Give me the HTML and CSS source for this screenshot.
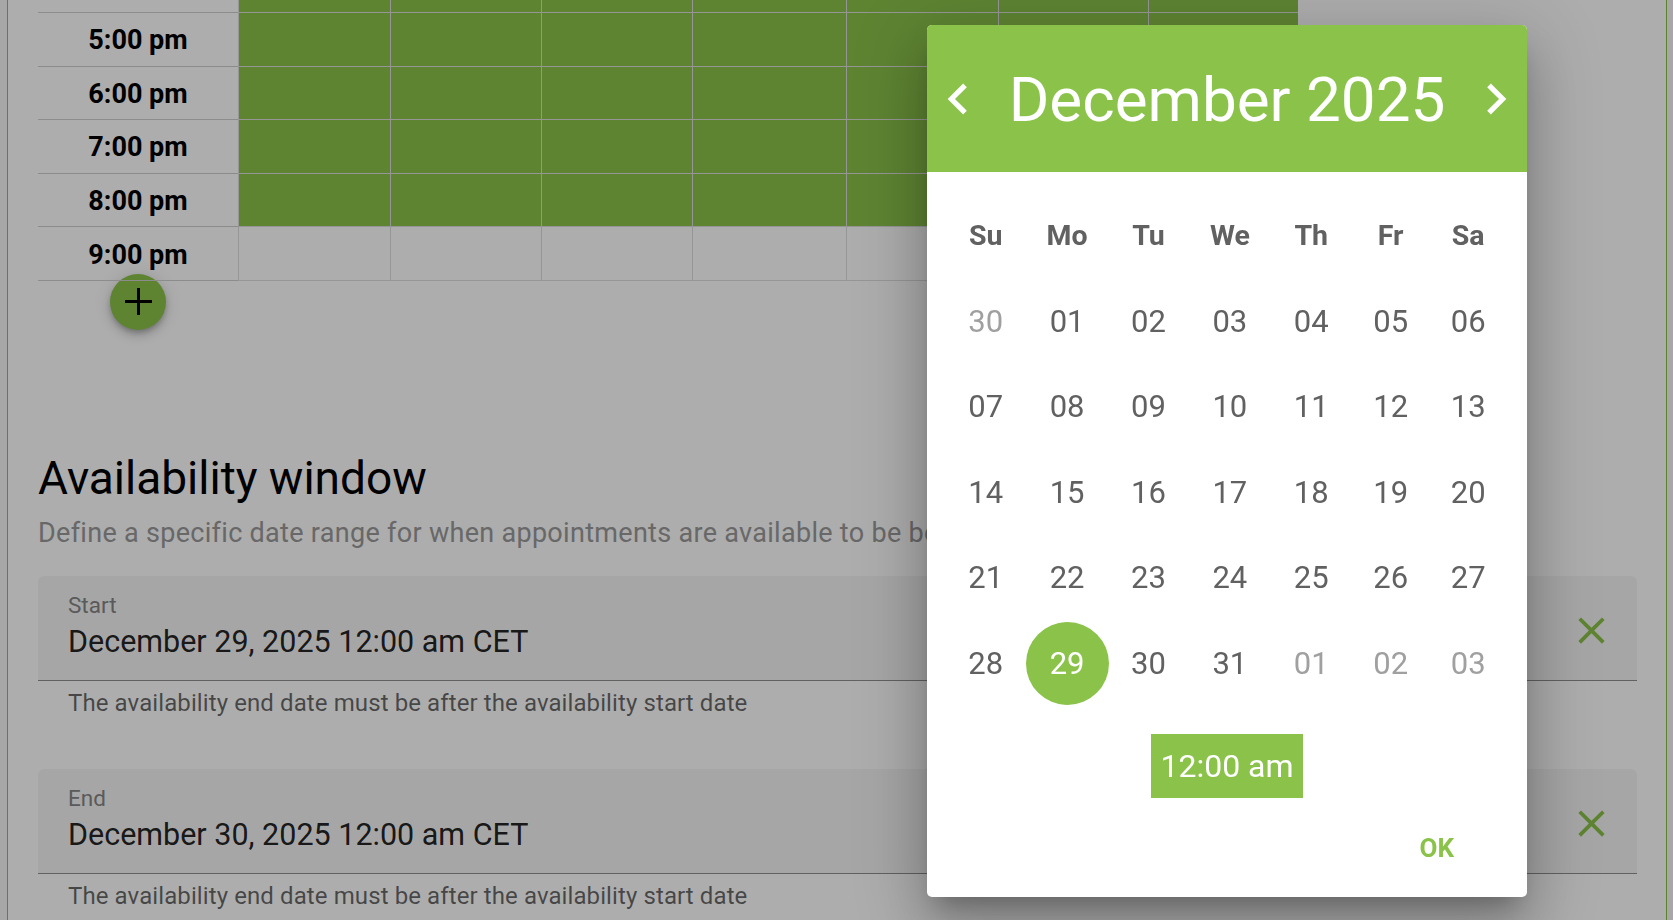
FILE: index.html
```html
<!DOCTYPE html>
<html lang="en">
<head>
  <meta charset="UTF-8">
  <title>Booking settings</title>
  <meta name="viewport" content="width=device-width, initial-scale=1.0">
  <link rel="stylesheet" href="styles.css">
</head>
<body>

  <div class="page">

    <!-- weekly hours grid, scrolled to the evening -->
    <div class="schedule">
      <div class="time"></div>
      <div class="slot on"></div><div class="slot on"></div><div class="slot on"></div><div class="slot on"></div><div class="slot on"></div><div class="slot on"></div><div class="slot on"></div>

      <div class="time">5:00 pm</div>
      <div class="slot on"></div><div class="slot on"></div><div class="slot on"></div><div class="slot on"></div><div class="slot on"></div><div class="slot on"></div><div class="slot on"></div>

      <div class="time">6:00 pm</div>
      <div class="slot on"></div><div class="slot on"></div><div class="slot on"></div><div class="slot on"></div><div class="slot on"></div><div class="slot on"></div><div class="slot on"></div>

      <div class="time">7:00 pm</div>
      <div class="slot on"></div><div class="slot on"></div><div class="slot on"></div><div class="slot on"></div><div class="slot on"></div><div class="slot on"></div><div class="slot on"></div>

      <div class="time">8:00 pm</div>
      <div class="slot on"></div><div class="slot on"></div><div class="slot on"></div><div class="slot on"></div><div class="slot on"></div><div class="slot on"></div><div class="slot on"></div>

      <div class="time">9:00 pm</div>
      <div class="slot"></div><div class="slot"></div><div class="slot"></div><div class="slot"></div><div class="slot"></div><div class="slot"></div><div class="slot"></div>
    </div>

    <button class="fab" title="Add hour">
      <svg width="27" height="27" viewBox="0 0 27 27"><path d="M13.5 0v27M0 13.5h27" stroke="#000" stroke-width="3"/></svg>
    </button>

    <section class="availability">
      <h2>Availability window</h2>
      <p class="subtitle">Define a specific date range for when appointments are available to be booked.</p>

      <div class="field">
        <div class="field-box">
          <div class="field-text">
            <div class="field-label">Start</div>
            <div class="field-value">December 29, 2025 12:00 am CET</div>
          </div>
          <button class="clear" title="Clear">
            <svg width="45" height="45" viewBox="0 0 24 24"><path d="M19 6.41L17.59 5 12 10.59 6.41 5 5 6.41 10.59 12 5 17.59 6.41 19 12 13.41 17.59 19 19 17.59 13.41 12z"/></svg>
          </button>
        </div>
        <div class="hint">The availability end date must be after the availability start date</div>
      </div>

      <div class="field">
        <div class="field-box">
          <div class="field-text">
            <div class="field-label">End</div>
            <div class="field-value">December 30, 2025 12:00 am CET</div>
          </div>
          <button class="clear" title="Clear">
            <svg width="45" height="45" viewBox="0 0 24 24"><path d="M19 6.41L17.59 5 12 10.59 6.41 5 5 6.41 10.59 12 5 17.59 6.41 19 12 13.41 17.59 19 19 17.59 13.41 12z"/></svg>
          </button>
        </div>
        <div class="hint">The availability end date must be after the availability start date</div>
      </div>
    </section>
  </div>

  <div class="backdrop"></div>

  <!-- date picker popup -->
  <div class="picker">
    <div class="picker-head">
      <button class="nav">
        <svg width="62" height="62" viewBox="0 0 24 24"><path d="M15.41 7.41L14 6l-6 6 6 6 1.41-1.41L10.83 12z"/></svg>
      </button>
      <div class="month">December 2025</div>
      <button class="nav">
        <svg width="62" height="62" viewBox="0 0 24 24"><path d="M10 6L8.59 7.41 13.17 12l-4.58 4.59L10 18l6-6z"/></svg>
      </button>
    </div>

    <div class="calendar">
      <div class="wd">Su</div><div class="wd">Mo</div><div class="wd">Tu</div><div class="wd">We</div><div class="wd">Th</div><div class="wd">Fr</div><div class="wd">Sa</div>

      <div class="day muted">30</div><div class="day">01</div><div class="day">02</div><div class="day">03</div><div class="day">04</div><div class="day">05</div><div class="day">06</div>
      <div class="day">07</div><div class="day">08</div><div class="day">09</div><div class="day">10</div><div class="day">11</div><div class="day">12</div><div class="day">13</div>
      <div class="day">14</div><div class="day">15</div><div class="day">16</div><div class="day">17</div><div class="day">18</div><div class="day">19</div><div class="day">20</div>
      <div class="day">21</div><div class="day">22</div><div class="day">23</div><div class="day">24</div><div class="day">25</div><div class="day">26</div><div class="day">27</div>
      <div class="day">28</div><div class="day"><span class="selected">29</span></div><div class="day">30</div><div class="day">31</div><div class="day muted">01</div><div class="day muted">02</div><div class="day muted">03</div>
    </div>

    <div class="time-row">
      <button class="time-btn">12:00 am</button>
    </div>

    <div class="picker-actions">
      <button class="ok-btn">OK</button>
    </div>
  </div>

</body>
</html>
```

FILE: styles.css
```css
:root {
  --green: #8bc34a;
  --line: #dedede;
  --text-muted: #616161;
}

html, body {
  height: 100%;
}

body {
  margin: 0;
  font-family: Roboto, "Noto Sans", Arial, sans-serif;
  background: #f7f7f7;
  overflow: hidden;
}

button {
  font-family: inherit;
  border: none;
  background: none;
  padding: 0;
  cursor: pointer;
}

.page {
  margin: 0 6px 0 7px;
  padding: 0 29px 40px 30px;
  min-height: 100%;
  background: #fff;
  border-left: 1px solid var(--green);
  border-right: 1px solid var(--green);
}

/* hours grid */
.schedule {
  display: grid;
  grid-template-columns: 200px 151.5px 151.5px 150.5px 154.5px 151.5px 150.5px 150px;
  grid-auto-rows: 53.6px;
  width: 1260px;
  margin-top: -40.6px;
}

.time {
  display: flex;
  align-items: center;
  justify-content: center;
  padding-top: 2px;
  font-size: 27px;
  font-weight: bold;
  color: #000;
  border-bottom: 1px solid #cfcfcf;
}

.slot {
  border-left: 1px solid var(--line);
  border-bottom: 1px solid var(--line);
}

.slot.on {
  background: var(--green);
}

.fab {
  display: flex;
  align-items: center;
  justify-content: center;
  width: 56px;
  height: 56px;
  margin: -7px 0 0 72px;
  border-radius: 50%;
  background: var(--green);
  box-shadow: 0 3px 5px -1px rgba(0, 0, 0, .2), 0 6px 10px 0 rgba(0, 0, 0, .14), 0 1px 18px 0 rgba(0, 0, 0, .12);
}

/* availability window */
.availability h2 {
  margin: 121px 0 0;
  font-size: 46px;
  font-weight: 400;
  color: #000;
}

.subtitle {
  margin: 12px 0 27px;
  font-size: 27px;
  letter-spacing: .3px;
  color: #9a9a9a;
  white-space: nowrap;
}

.field {
  margin-bottom: 54px;
}

.field-box {
  display: flex;
  align-items: center;
  height: 104px;
  padding: 0 23px 0 30px;
  background: rgba(0, 0, 0, .04);
  border-bottom: 1px solid rgba(0, 0, 0, .42);
  border-radius: 6px 6px 0 0;
}

.field-text {
  flex: 1;
  align-self: flex-start;
  padding-top: 16px;
}

.field-label {
  font-size: 22.5px;
  line-height: 26px;
  color: #858585;
}

.field-value {
  margin-top: 6px;
  font-size: 30.5px;
  line-height: 36px;
  color: rgba(0, 0, 0, .87);
}

.clear {
  display: flex;
  margin-top: 5px;
  fill: var(--green);
}

.hint {
  padding: 10px 30px 0;
  font-size: 24px;
  line-height: 24px;
  letter-spacing: .1px;
  color: rgba(0, 0, 0, .6);
}

/* dim layer behind the picker */
.backdrop {
  position: fixed;
  inset: 0;
  background: rgba(0, 0, 0, .32);
}

.picker {
  position: absolute;
  left: 927px;
  top: 25px;
  width: 600px;
  background: #fff;
  border-radius: 5px;
  overflow: hidden;
  box-shadow: 0 16px 22px -10px rgba(0, 0, 0, .25), 0 36px 56px 4px rgba(0, 0, 0, .16), 0 14px 70px 12px rgba(0, 0, 0, .14);
}

.picker-head {
  display: flex;
  align-items: center;
  justify-content: space-between;
  height: 147px;
  background: var(--green);
}

.nav {
  display: flex;
  fill: #fff;
}

.month {
  padding-top: 2px;
  font-size: 62px;
  color: #fff;
}

.calendar {
  display: grid;
  grid-template-columns: repeat(5, 81.4px) repeat(2, 77.5px);
  grid-auto-rows: 85.5px;
  padding: 21px 19px 0 18px;
}

.wd, .day {
  display: flex;
  align-items: center;
  justify-content: center;
  color: var(--text-muted);
}

.wd {
  font-size: 28.5px;
  font-weight: bold;
}

.day {
  font-size: 31px;
}

.day.muted {
  color: #a0a0a0;
}

.selected {
  display: flex;
  align-items: center;
  justify-content: center;
  flex: none;
  width: 83px;
  height: 83px;
  border-radius: 50%;
  background: var(--green);
  color: #fff;
}

.time-row {
  display: flex;
  justify-content: center;
  margin-top: 28px;
}

.time-btn {
  height: 64px;
  padding: 0 9px;
  background: var(--green);
  color: #fff;
  font-size: 32px;
}

.picker-actions {
  display: flex;
  align-items: center;
  justify-content: flex-end;
  height: 99px;
  padding-right: 49px;
}

.ok-btn {
  padding: 12px 24px;
  color: var(--green);
  font-size: 26px;
  font-weight: bold;
}
```
